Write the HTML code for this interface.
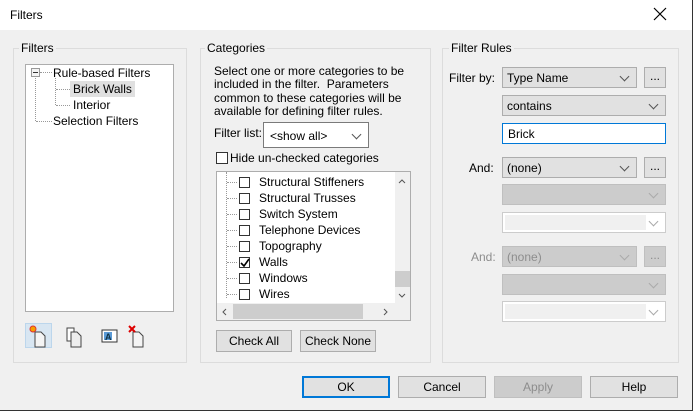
<!DOCTYPE html>
<html><head><style>
*{box-sizing:border-box;margin:0;padding:0}
body{width:694px;height:411px;background:#fff;font-family:"Liberation Sans",sans-serif;font-size:12px;color:#000;position:relative;overflow:hidden}
.a{position:absolute;white-space:nowrap}
.win{left:0;top:0;width:693px;height:411px;border-right:1px solid #333;border-bottom:1px solid #333;background:#f0f0f0}
.title{left:0;top:0;width:692px;height:30px;background:#fff}
.grp{border:1px solid #dcdcdc}
.lbl{background:#f0f0f0;padding:0 2px;line-height:14px}
.cb{border:1px solid #adadad;background:#e1e1e1}
.btn{border:1px solid #adadad;background:#e1e1e1;text-align:center;line-height:20px}
.chev{position:absolute;right:8px;top:6px;width:7px;height:7px;border-right:1px solid #555;border-bottom:1px solid #555;transform:rotate(45deg)}
.box{width:11px;height:11px;border:1px solid #333;background:#fff}
.dots{border-top:1px dotted #999}
</style></head><body>
<div class="a win"></div>
<div class="a title"></div>
<div class="a" style="left:10px;top:8px;font-size:12px">Filters</div>
<svg class="a" style="left:653px;top:7px" width="14" height="14"><path d="M1 1L13 13M13 1L1 13" stroke="#000" stroke-width="1.2"/></svg>

<!-- Filters group -->
<div class="a grp" style="left:13px;top:48px;width:174px;height:315px"></div>
<div class="a lbl" style="left:19px;top:41px">Filters</div>
<div class="a" style="left:25px;top:64px;width:149px;height:248px;background:#fff;border:1px solid #adadad"></div>
<div class="a" style="left:31px;top:68px;width:9px;height:9px;border:1px solid #999;background:#f4f4f4"></div>
<div class="a" style="left:33px;top:72px;width:5px;height:1px;background:#333"></div>
<div class="a dots" style="left:40px;top:72px;width:12px"></div>
<div class="a" style="left:35px;top:78px;height:43px;border-left:1px dotted #999"></div>
<div class="a dots" style="left:36px;top:121px;width:16px"></div>
<div class="a" style="left:55px;top:78px;height:27px;border-left:1px dotted #999"></div>
<div class="a dots" style="left:56px;top:89px;width:14px"></div>
<div class="a dots" style="left:56px;top:105px;width:14px"></div>
<div class="a" style="left:53px;top:66px">Rule-based Filters</div>
<div class="a" style="left:70px;top:81px;background:#e0e0e0;padding:1px 3px">Brick Walls</div>
<div class="a" style="left:73px;top:98px">Interior</div>
<div class="a" style="left:53px;top:114px">Selection Filters</div>
<div class="a" style="left:25px;top:323px;width:27px;height:25px;background:#d8e6f2;border:1px solid #bcd6ec"></div>
<svg class="a" style="left:27px;top:325px" width="150" height="24">
<path d="M8 7h6l4 4v11H8z" fill="#f4f4f4" stroke="#444"/><circle cx="6" cy="4" r="3" fill="#f5a000" stroke="#d33"/>
<path d="M40 3h7v13h-7z" fill="#fff" stroke="#444"/><path d="M44 7h6l4 4v11H44z" fill="#eee" stroke="#444"/>
<rect x="75" y="5" width="15" height="12" fill="#fff" stroke="#333"/><rect x="77" y="7" width="8" height="8" fill="#5a9ad6"/><text x="78" y="15" font-size="9" font-weight="bold" fill="#134">A</text>
<path d="M106 7h6l4 4v11H106z" fill="#f4f4f4" stroke="#444"/><path d="M102 1l6 6M108 1l-6 6" stroke="#d00" stroke-width="2"/>
</svg>

<!-- Categories -->
<div class="a grp" style="left:200px;top:48px;width:231px;height:315px"></div>
<div class="a lbl" style="left:205px;top:41px">Categories</div>
<div class="a" style="left:214px;top:65px;line-height:13.3px;white-space:normal;width:200px">Select one or more categories to be included in the filter.&nbsp; Parameters common to these categories will be available for defining filter rules.</div>
<div class="a" style="left:214px;top:126px">Filter list:</div>
<div class="a" style="left:263px;top:122px;width:106px;height:26px;background:#fff;border:1px solid #7a7a7a;padding:6px 0 0 6px">&lt;show all&gt;<div class="chev" style="top:8px"></div></div>
<div class="a" style="left:216px;top:152px;width:12px;height:12px;border:1px solid #333;background:#fff"></div>
<div class="a" style="left:230px;top:151px">Hide un-checked categories</div>
<div class="a" style="left:216px;top:171px;width:195px;height:150px;background:#fff;border:1px solid #adadad"></div>
<div class="a" style="left:226px;top:172px;height:126px;border-left:1px dotted #999"></div>
<div class="a" style="left:395px;top:172px;width:15px;height:131px;background:#f0f0f0"></div>
<div class="a" style="left:395px;top:271px;width:15px;height:16px;background:#cdcdcd"></div>
<div class="a" style="left:217px;top:303px;width:193px;height:17px;background:#f0f0f0"></div>
<div class="a" style="left:233px;top:304px;width:130px;height:15px;background:#cdcdcd"></div>
<svg class="a" style="left:217px;top:172px" width="194" height="148">
<path d="M182 11l3-3 3 3" stroke="#555" fill="none"/>
<path d="M182 122l3 3 3-3" stroke="#555" fill="none"/>
<path d="M9 137l-3 3 3 3" stroke="#555" fill="none"/>
<path d="M167 137l3 3-3 3" stroke="#555" fill="none"/>
</svg>
<div class="a" style="left:227px;top:174px;line-height:16px;width:168px">
<div style="position:relative;height:16px"><span class="a dots" style="left:0;top:8px;width:10px"></span><span class="a box" style="left:12px;top:3px"></span><span class="a" style="left:32px;top:0">Structural Stiffeners</span></div>
<div style="position:relative;height:16px"><span class="a dots" style="left:0;top:8px;width:10px"></span><span class="a box" style="left:12px;top:3px"></span><span class="a" style="left:32px;top:0">Structural Trusses</span></div>
<div style="position:relative;height:16px"><span class="a dots" style="left:0;top:8px;width:10px"></span><span class="a box" style="left:12px;top:3px"></span><span class="a" style="left:32px;top:0">Switch System</span></div>
<div style="position:relative;height:16px"><span class="a dots" style="left:0;top:8px;width:10px"></span><span class="a box" style="left:12px;top:3px"></span><span class="a" style="left:32px;top:0">Telephone Devices</span></div>
<div style="position:relative;height:16px"><span class="a dots" style="left:0;top:8px;width:10px"></span><span class="a box" style="left:12px;top:3px"></span><span class="a" style="left:32px;top:0">Topography</span></div>
<div style="position:relative;height:16px"><span class="a dots" style="left:0;top:8px;width:10px"></span><span class="a box" style="left:12px;top:3px"></span><svg class="a" style="left:13px;top:4px" width="10" height="10"><path d="M1 5l3 3 5-7" stroke="#000" stroke-width="1.6" fill="none"/></svg><span class="a" style="left:32px;top:0">Walls</span></div>
<div style="position:relative;height:16px"><span class="a dots" style="left:0;top:8px;width:10px"></span><span class="a box" style="left:12px;top:3px"></span><span class="a" style="left:32px;top:0">Windows</span></div>
<div style="position:relative;height:16px"><span class="a dots" style="left:0;top:8px;width:10px"></span><span class="a box" style="left:12px;top:3px"></span><span class="a" style="left:32px;top:0">Wires</span></div>
</div>
<div class="a btn" style="left:216px;top:330px;width:76px;height:22px">Check All</div>
<div class="a btn" style="left:300px;top:330px;width:76px;height:22px">Check None</div>

<!-- Filter Rules -->
<div class="a grp" style="left:442px;top:48px;width:237px;height:315px"></div>
<div class="a lbl" style="left:449px;top:41px">Filter Rules</div>
<div class="a" style="left:449px;top:71px">Filter by:</div>
<div class="a cb" style="left:502px;top:67px;width:135px;height:21px;padding:3px 4px">Type Name<div class="chev" style="top:5px"></div></div>
<div class="a btn" style="left:644px;top:67px;width:22px;height:21px;line-height:16px">...</div>
<div class="a cb" style="left:502px;top:95px;width:164px;height:21px;padding:3px 4px">contains<div class="chev" style="top:5px"></div></div>
<div class="a" style="left:502px;top:123px;width:164px;height:21px;background:#fff;border:1px solid #0078d7;padding:3px 5px">Brick</div>
<div class="a" style="left:469px;top:161px">And:</div>
<div class="a cb" style="left:502px;top:157px;width:135px;height:21px;padding:3px 4px">(none)<div class="chev" style="top:5px"></div></div>
<div class="a btn" style="left:644px;top:157px;width:22px;height:21px;line-height:16px">...</div>
<div class="a" style="left:502px;top:184px;width:164px;height:21px;background:#ccc;border:1px solid #bfbfbf"><div class="chev" style="top:5px;border-color:#aaa"></div></div>
<div class="a" style="left:502px;top:212px;width:164px;height:21px;background:#fff;border:1px solid #ccc"><div style="position:absolute;left:2px;top:2px;width:141px;height:15px;background:#f0f0f0"></div><div class="chev" style="top:5px;border-color:#aaa"></div></div>
<div class="a" style="left:471px;top:250px;color:#8d8d8d">And:</div>
<div class="a" style="left:502px;top:246px;width:135px;height:21px;background:#ccc;border:1px solid #bfbfbf;padding:3px 4px;color:#8d8d8d">(none)<div class="chev" style="top:5px;border-color:#aaa"></div></div>
<div class="a" style="left:644px;top:246px;width:22px;height:21px;background:#ccc;border:1px solid #bfbfbf;text-align:center;line-height:16px;color:#8d8d8d">...</div>
<div class="a" style="left:502px;top:274px;width:164px;height:21px;background:#ccc;border:1px solid #bfbfbf"><div class="chev" style="top:5px;border-color:#aaa"></div></div>
<div class="a" style="left:502px;top:301px;width:164px;height:21px;background:#fff;border:1px solid #ccc"><div style="position:absolute;left:2px;top:2px;width:141px;height:15px;background:#f0f0f0"></div><div class="chev" style="top:5px;border-color:#aaa"></div></div>

<!-- bottom buttons -->
<div class="a btn" style="left:302px;top:376px;width:88px;height:22px;border:2px solid #0078d7;line-height:18px">OK</div>
<div class="a btn" style="left:398px;top:376px;width:88px;height:22px">Cancel</div>
<div class="a btn" style="left:494px;top:376px;width:88px;height:22px;background:#ccc;border-color:#bfbfbf;color:#8d8d8d">Apply</div>
<div class="a btn" style="left:590px;top:376px;width:88px;height:22px">Help</div>
</body></html>
